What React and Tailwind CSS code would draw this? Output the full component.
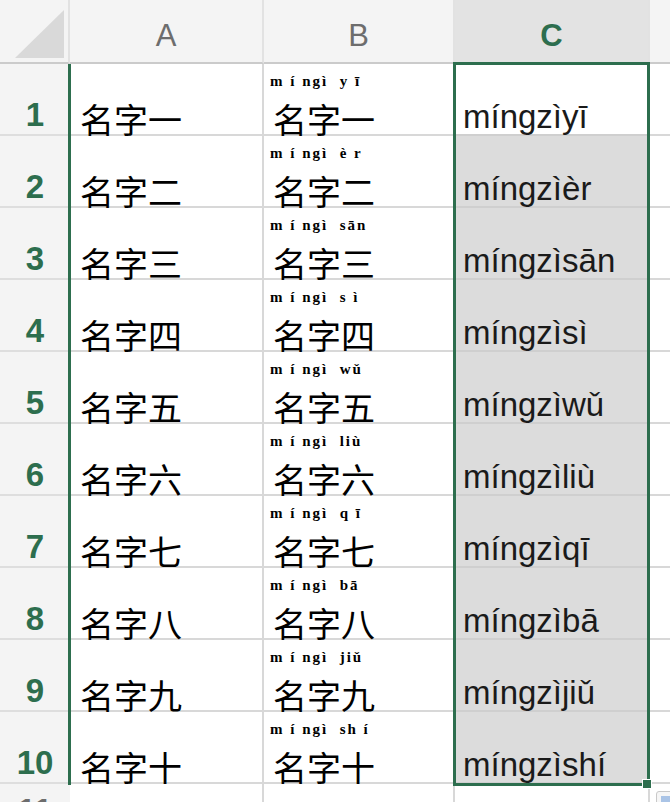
import React from 'react';

const rows = [
  ['名字一', 'm í ngì  y ī', 'míngzìyī'],
  ['名字二', 'm í ngì  è r', 'míngzìèr'],
  ['名字三', 'm í ngì  sān', 'míngzìsān'],
  ['名字四', 'm í ngì  s ì', 'míngzìsì'],
  ['名字五', 'm í ngì  wǔ', 'míngzìwǔ'],
  ['名字六', 'm í ngì  liù', 'míngzìliù'],
  ['名字七', 'm í ngì  q ī', 'míngzìqī'],
  ['名字八', 'm í ngì  bā', 'míngzìbā'],
  ['名字九', 'm í ngì  jiǔ', 'míngzìjiǔ'],
  ['名字十', 'm í ngì  sh í', 'míngzìshí'],
];

const cjk = "font-['Noto_Sans_CJK_SC',sans-serif]";
const sans = "font-['Liberation_Sans',Arial,sans-serif]";

const ColHeader = ({ label, active }) => (
  <div
    className={`flex items-end justify-center pb-[11px] border-r-2 border-b-2 border-r-[#e2e2e2] border-b-[#cbcbcb] ${sans} text-[31px] leading-none ${
      active ? `bg-[#e3e3e3] font-bold text-[#2d6e4e]` : 'bg-[#f4f4f4] text-[#6d6d6d]'
    }`}
  >
    {label}
  </div>
);

export default function App() {
  return (
    <div className="relative w-[670px] h-[802px] overflow-hidden bg-white">
      <div className="grid grid-cols-[70px_194px_191px_195px_1fr] grid-rows-[64px_repeat(11,72px)]">
        {/* corner */}
        <div className="relative bg-[#f4f4f4] border-r-2 border-b-2 border-r-[#e2e2e2] border-b-[#cbcbcb]">
          <svg className="absolute left-0 top-0" width="68" height="62" viewBox="0 0 68 62">
            <polygon points="15,58 64,58 64,10" fill="#d9d9d9" />
          </svg>
        </div>
        <ColHeader label="A" />
        <ColHeader label="B" />
        <ColHeader label="C" active />
        <div className="bg-[#f4f4f4] border-b-2 border-b-[#cbcbcb]" />

        {rows.map(([han, ruby, pinyin], i) => (
          <React.Fragment key={i}>
            <div
              className={`flex items-end justify-center pb-[3px] bg-[#f4f4f4] border-b-2 border-b-[#dedede] ${sans} text-[33px] font-bold leading-none text-[#2d6e4e]`}
            >
              {i + 1}
            </div>
            <div className={`flex items-end pl-[10px] border-r-2 border-b-2 border-[#d8d8d8] ${cjk} text-[34px] leading-[30px] text-black`}>
              {han}
            </div>
            <div className="flex flex-col justify-end pl-[6px] border-r-2 border-b-2 border-[#d8d8d8]">
              <div className="font-['Liberation_Serif',serif] font-bold text-[15px] leading-none whitespace-pre tracking-[2px] text-black mb-[15px]">
                {ruby}
              </div>
              <div className={`pl-[3px] ${cjk} text-[34px] leading-[30px] text-black`}>{han}</div>
            </div>
            <div
              className={`flex items-end pl-[8px] pb-[1px] border-r-2 border-b-2 border-[#cfcfcf] ${sans} text-[33px] leading-none text-[#1a1a1a] ${
                i === 0 ? 'bg-white' : 'bg-[#dcdcdc]'
              }`}
            >
              {pinyin}
            </div>
            <div className="border-b-2 border-[#d8d8d8]" />
          </React.Fragment>
        ))}

        {/* row 11, cut off at the window edge */}
        <div className={`flex items-start justify-center pt-[10px] bg-[#f4f4f4] ${sans} text-[33px] font-bold leading-none text-[#6d6d6d]`}>
          11
        </div>
        <div className="border-r-2 border-[#d8d8d8]" />
        <div className="border-r-2 border-[#d8d8d8]" />
        <div className="border-r-2 border-[#d8d8d8]" />
        <div />
      </div>

      {/* selection frame over column C */}
      <div className="absolute left-[68px] top-[64px] w-[3px] h-[721px] bg-[#2d6e4e]" />
      <div className="absolute left-[453px] top-[62px] w-[197px] h-[724px] border-[3px] border-[#2d6e4e]" />
      <div className="absolute left-[642px] top-[779px] w-[10px] h-[10px] bg-[#2d6e4e] border border-white" />
      <div className="absolute left-[656px] top-[791px] w-[20px] h-[20px] rounded-[3px] border border-[#c9c9c9] bg-[#f6f6f6]">
        <div className="ml-[4px] mt-[4px] w-[10px] h-[10px] bg-[#aac4e6]" />
      </div>
    </div>
  );
}
